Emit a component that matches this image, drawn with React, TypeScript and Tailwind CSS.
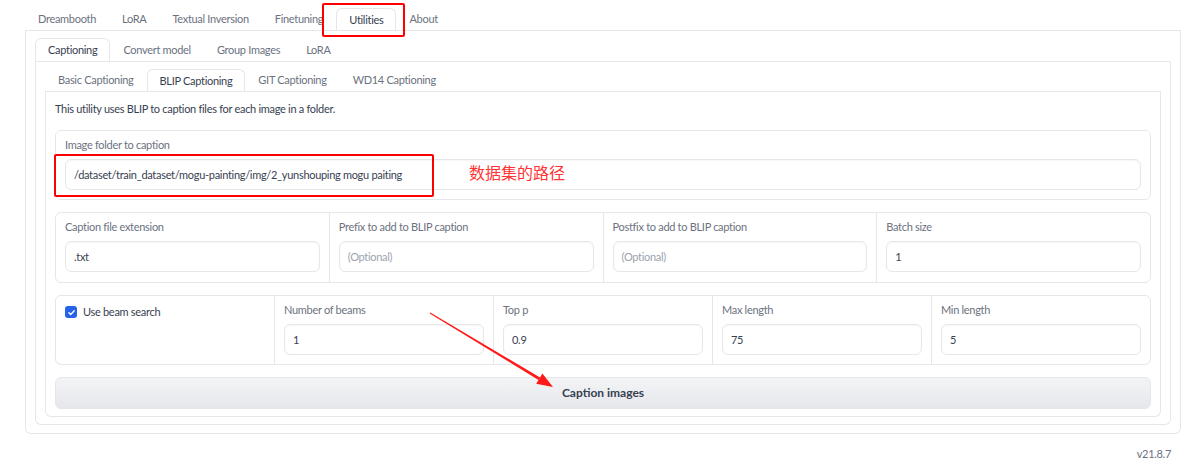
import React from 'react';

type TabNavProps = { tabs: string[]; active: string; h: string };

const TabNav = ({ tabs, active, h }: TabNavProps) => (
    <div className="flex border-b border-[#e5e7eb]">
        {tabs.map((t) =>
            t === active ? (
                <div
                    key={t}
                    className={`${h} -mb-px flex items-center pt-px px-[12px] bg-white border border-b-0 border-[#e5e7eb] rounded-t-[6px] text-[#374151]`}
                >
                    {t}
                </div>
            ) : (
                <div key={t} className={`${h} flex items-center pt-px px-[13px] text-[#6b7280]`}>
                    {t}
                </div>
            )
        )}
    </div>
);

type FieldProps = { label: string; value?: string; placeholder?: string; pb?: string };

const Field = ({ label, value, placeholder, pb = 'pb-[9px]' }: FieldProps) => (
    <div className={`bg-white px-[9px] pt-[6px] ${pb}`}>
        <div className="h-4 leading-4 text-[#6b7280]">{label}</div>
        <div className="mt-[6px] h-[31px] flex items-center pt-[2px] px-2 border border-[#e5e7eb] rounded-[6px] shadow-[inset_0_1px_2px_rgba(0,0,0,0.04)]">
            {value ? (
                <span className="text-[#374151]">{value}</span>
            ) : (
                <span className="text-[#9ca3af]">{placeholder}</span>
            )}
        </div>
    </div>
);

export default function App() {
    return (
        <div className="relative w-[1192px] h-[471px] bg-white font-['Lato','Noto_Sans',sans-serif] text-[11px] tracking-[-0.3px]">
            <div className="pt-[8px] pl-[25px] pr-[11px]">
                <TabNav
                    h="h-[22px]"
                    tabs={['Dreambooth', 'LoRA', 'Textual Inversion', 'Finetuning', 'Utilities', 'About']}
                    active="Utilities"
                />
                <div className="border-x border-b border-[#e5e7eb] rounded-b-[6px] px-[9px] pt-[7px] pb-[8px]">
                    <TabNav
                        h="h-[23px]"
                        tabs={['Captioning', 'Convert model', 'Group Images', 'LoRA']}
                        active="Captioning"
                    />
                    <div className="border-x border-b border-[#e5e7eb] rounded-b-[6px] px-[9px] pt-[7px] pb-[7px]">
                        <TabNav
                            h="h-[22px]"
                            tabs={['Basic Captioning', 'BLIP Captioning', 'GIT Captioning', 'WD14 Captioning']}
                            active="BLIP Captioning"
                        />
                        <div className="border-x border-b border-[#e5e7eb] rounded-b-[6px] px-[9px] pt-[8px] pb-[7px]">
                            <p className="h-[17px] leading-[17px] text-[#374151]">
                                This utility uses BLIP to caption files for each image in a folder.
                            </p>

                            <div className="mt-[13px] border border-[#e5e7eb] rounded-[6px] overflow-hidden">
                                <Field
                                    label="Image folder to caption"
                                    value="/dataset/train_dataset/mogu-painting/img/2_yunshouping mogu paiting"
                                />
                            </div>

                            <div className="mt-[12px] grid grid-cols-4 gap-px bg-[#e5e7eb] border border-[#e5e7eb] rounded-[6px] overflow-hidden">
                                <Field label="Caption file extension" value=".txt" pb="pb-[10px]" />
                                <Field label="Prefix to add to BLIP caption" placeholder="(Optional)" pb="pb-[10px]" />
                                <Field label="Postfix to add to BLIP caption" placeholder="(Optional)" pb="pb-[10px]" />
                                <Field label="Batch size" value="1" pb="pb-[10px]" />
                            </div>

                            <div className="mt-[12px] grid grid-cols-5 gap-px bg-[#e5e7eb] border border-[#e5e7eb] rounded-[6px] overflow-hidden">
                                <div className="bg-white px-[9px] pt-[8px]">
                                    <label className="flex items-center gap-[6px] h-4 text-[#374151]">
                                        <span className="w-[12px] h-[12px] rounded-[3px] bg-[#2563eb] flex items-center justify-center">
                                            <svg width="9" height="9" viewBox="0 0 12 12" fill="none">
                                                <path d="M2.5 6.2 5 8.6 9.6 3.6" stroke="white" strokeWidth="1.8" strokeLinecap="round" strokeLinejoin="round" />
                                            </svg>
                                        </span>
                                        Use beam search
                                    </label>
                                </div>
                                <Field label="Number of beams" value="1" />
                                <Field label="Top p" value="0.9" />
                                <Field label="Max length" value="75" />
                                <Field label="Min length" value="5" />
                            </div>

                            <button className="mt-[12px] w-full h-[32px] rounded-[6px] border border-[#e5e7eb] bg-gradient-to-b from-[#f3f4f6] to-[#e5e7eb] font-bold text-[#374151] text-[12px] tracking-normal">
                                Caption images
                            </button>
                        </div>
                    </div>
                </div>
                <div className="mt-[12px] pr-[10px] text-right text-[11px] text-[#6b7280] tracking-[-0.3px]">v21.8.7</div>
            </div>

            {/* annotations drawn over the screenshot */}
            <div className="absolute left-[322px] top-[3px] w-[83px] h-[34px] border-2 border-[#ff0000] rounded-[2px]" />
            <div className="absolute left-[54px] top-[154px] w-[380px] h-[43px] border-2 border-[#ff0000] rounded-[2px]" />
            <div className="absolute left-[469px] top-[161px] text-[16px] leading-[22px] tracking-normal text-[#ff3333] font-['Noto_Sans_CJK_SC',sans-serif]">
                数据集的路径
            </div>
            <svg className="absolute left-0 top-0 pointer-events-none" width="1192" height="471">
                <polygon points="429.7,313.4 430.3,312.6 540.1,377.4 538.5,380" fill="#ff1a1a" />
                <polygon points="553,387 536.2,383.8 542.4,373.6" fill="#ff1a1a" />
            </svg>
        </div>
    );
}
